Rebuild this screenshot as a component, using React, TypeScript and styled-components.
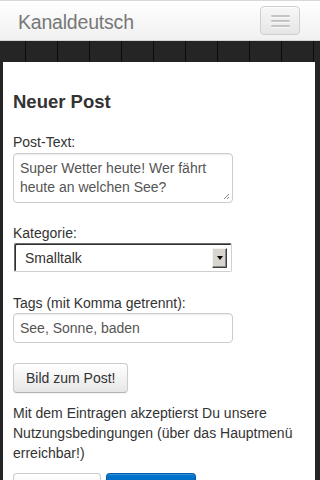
import styled, { createGlobalStyle } from 'styled-components';

const GlobalStyle = createGlobalStyle`
  html, body {
    margin: 0;
    padding: 0;
  }
  body {
    font-family: 'Liberation Sans', Arial, sans-serif;
    font-size: 14px;
    line-height: 20px;
    color: #333;
    background:
      linear-gradient(to right, #0d0d0d 0 1px, transparent 1px) 25px 0 / 32px 100% repeat-x,
      #252525;
  }
`;

const Page = styled.div`
  width: 320px;
  height: 480px;
  overflow: hidden;
  display: flex;
  flex-direction: column;
`;

const Navbar = styled.header`
  height: 41px;
  flex-shrink: 0;
  box-sizing: border-box;
  display: flex;
  align-items: center;
  justify-content: space-between;
  padding: 0 20px 0 18px;
  border-top: 1px solid #d8d8d8;
  border-bottom: 1px solid #d4d4d4;
  background: linear-gradient(to bottom, #ffffff, #f0f0f0);
`;

const Brand = styled.div`
  font-size: 19.5px;
  color: #777;
  letter-spacing: -0.2px;
  padding-top: 2px;
`;

const Toggle = styled.button`
  width: 40px;
  height: 29px;
  padding: 0;
  border: 1px solid #cfcfcf;
  border-radius: 4px;
  background: linear-gradient(to bottom, #f7f7f7, #e6e6e6);
  display: flex;
  flex-direction: column;
  align-items: center;
  justify-content: center;
  gap: 3px;
  box-shadow: inset 0 1px 0 rgba(255, 255, 255, 0.6);
`;

const Bar = styled.span`
  display: block;
  width: 19px;
  height: 2px;
  border-radius: 1px;
  background: #c4c4c4;
  box-shadow: 0 1px 0 #fafafa;
`;

const Strip = styled.div`
  height: 21px;
  flex-shrink: 0;
`;

const Panel = styled.main`
  flex: 1;
  margin: 0 5px 0 3px;
  background: #fff;
  padding: 30px 10px 0;
`;

const Heading = styled.h3`
  margin: 0 0 20px;
  font-size: 18.5px;
  line-height: 20px;
  font-weight: bold;
  color: #333;
`;

const Field = styled.div<{ gap?: number }>`
  display: flex;
  flex-direction: column;
  align-items: flex-start;
  margin-bottom: ${(p) => p.gap ?? 20}px;
`;

const Label = styled.label`
  display: block;
  line-height: 20px;
  color: #333;
`;

const TextArea = styled.div`
  width: 220px;
  height: 50px;
  margin-top: 1px;
  box-sizing: border-box;
  padding: 5px 6px;
  border: 1px solid #ccc;
  border-radius: 4px;
  color: #555;
  line-height: 19px;
  position: relative;
  box-shadow: inset 0 1px 1px rgba(0, 0, 0, 0.075);
`;

const Grip = styled.svg`
  position: absolute;
  right: 2px;
  bottom: 2px;
`;

const Select = styled.div`
  width: 218px;
  height: 29px;
  margin-left: 1px;
  box-sizing: border-box;
  display: flex;
  align-items: center;
  justify-content: space-between;
  padding: 0 4px 0 10px;
  border-style: solid;
  border-width: 1px;
  border-color: #6e6e6e #d0d0d0 #d0d0d0 #6e6e6e;
  box-shadow: inset 1px 1px 0 #2e2e2e;
  border-radius: 2px;
  background: #fff;
  color: #333;
`;

const DropButton = styled.span`
  width: 15px;
  height: 20px;
  box-sizing: border-box;
  display: flex;
  align-items: center;
  justify-content: center;
  background: #d8d5ce;
  border-style: solid;
  border-width: 1px;
  border-color: #f4f4f4 #404040 #404040 #f4f4f4;
  box-shadow: inset -1px -1px 0 #8a8a8a;
`;

const Arrow = styled.span`
  width: 0;
  height: 0;
  border-left: 3.5px solid transparent;
  border-right: 3.5px solid transparent;
  border-top: 4px solid #000;
`;

const Input = styled.div`
  width: 220px;
  height: 30px;
  box-sizing: border-box;
  padding: 4px 6px;
  border: 1px solid #ccc;
  border-radius: 4px;
  color: #555;
  box-shadow: inset 0 1px 1px rgba(0, 0, 0, 0.075);
`;

const Button = styled.button<{ primary?: boolean; width?: number }>`
  height: 30px;
  box-sizing: border-box;
  padding: 4px 12px;
  font: inherit;
  width: ${(p) => (p.width ? `${p.width}px` : 'auto')};
  border: 1px solid ${(p) => (p.primary ? '#0058a8' : '#cccccc')};
  border-bottom-color: ${(p) => (p.primary ? '#004a90' : '#b3b3b3')};
  border-radius: 4px;
  color: ${(p) => (p.primary ? '#fff' : '#333')};
  background: ${(p) =>
    p.primary
      ? 'linear-gradient(to bottom, #0077cc, #0050c0)'
      : 'linear-gradient(to bottom, #ffffff, #e6e6e6)'};
  box-shadow: inset 0 1px 0 rgba(255, 255, 255, 0.2), 0 1px 2px rgba(0, 0, 0, 0.05);
`;

const Note = styled.p`
  margin: 10px 0;
  color: #333;
`;

const Actions = styled.div`
  display: flex;
  gap: 5px;
`;

export default function App() {
  return (
    <Page>
      <GlobalStyle />
      <Navbar>
        <Brand>Kanaldeutsch</Brand>
        <Toggle aria-label="Menü">
          <Bar />
          <Bar />
          <Bar />
        </Toggle>
      </Navbar>
      <Strip />
      <Panel>
        <Heading>Neuer Post</Heading>
        <Field gap={20}>
          <Label>Post-Text:</Label>
          <TextArea>
            Super Wetter heute! Wer fährt heute an welchen See?
            <Grip width="7" height="7" viewBox="0 0 7 7">
              <path d="M6 1 L1 6 M6 4 L4 6" stroke="#888" strokeWidth="1" />
            </Grip>
          </TextArea>
        </Field>
        <Field gap={21}>
          <Label>Kategorie:</Label>
          <Select>
            <span>Smalltalk</span>
            <DropButton>
              <Arrow />
            </DropButton>
          </Select>
        </Field>
        <Field gap={20}>
          <Label>Tags (mit Komma getrennt):</Label>
          <Input>See, Sonne, baden</Input>
        </Field>
        <Button>Bild zum Post!</Button>
        <Note>
          Mit dem Eintragen akzeptierst Du unsere Nutzungsbedingungen (über das Hauptmenü
          erreichbar!)
        </Note>
        <Actions>
          <Button width={88} aria-label="Abbrechen" />
          <Button primary width={90} aria-label="Posten" />
        </Actions>
      </Panel>
    </Page>
  );
}
